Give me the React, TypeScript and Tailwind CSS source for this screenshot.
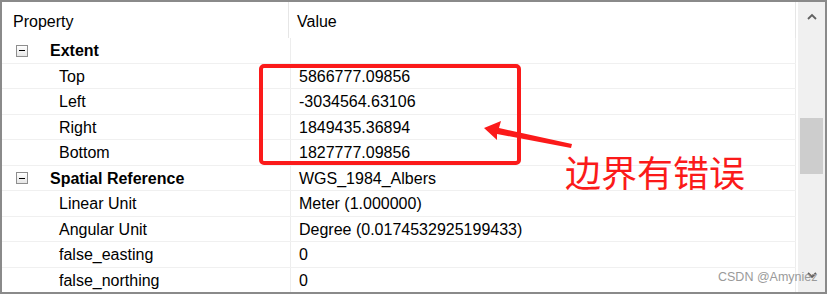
const font = { fontFamily: '"Liberation Sans", Arial, sans-serif' };

type Row = { name: string; value: string; group?: boolean };

const rows: Row[] = [
  { name: "Extent", value: "", group: true },
  { name: "Top", value: "5866777.09856" },
  { name: "Left", value: "-3034564.63106" },
  { name: "Right", value: "1849435.36894" },
  { name: "Bottom", value: "1827777.09856" },
  { name: "Spatial Reference", value: "WGS_1984_Albers", group: true },
  { name: "Linear Unit", value: "Meter (1.000000)" },
  { name: "Angular Unit", value: "Degree (0.0174532925199433)" },
  { name: "false_easting", value: "0" },
  { name: "false_northing", value: "0" },
];

function MinusBox() {
  return (
    <div className="w-[12px] h-[12px] border border-[#8e8e8e] bg-gradient-to-b from-white to-[#e6e6e6] flex items-center justify-center">
      <div className="w-[6px] h-[1px] bg-black" />
    </div>
  );
}

export default function App() {
  return (
    <div
      className="relative w-[827px] h-[294px] overflow-hidden border-2 border-[#8a8a8a] bg-white flex text-[16px] text-black"
      style={font}
    >
      {/* grid */}
      <div className="w-[794px] flex flex-col">
        <div className="h-[36px] flex shrink-0">
          <div className="w-[287px] border-r border-[#e6e6e6] flex items-center pl-[11px] pt-[3px]">Property</div>
          <div className="flex-1 border-r border-[#e6e6e6] flex items-center pl-[8px] pt-[3px]">Value</div>
        </div>
        {rows.map((r) => (
          <div key={r.name} className="h-[25.5px] shrink-0 flex border-b border-[#f0f0f0]">
            <div className="w-[289px] border-r border-[#ededed] flex items-center pt-[2px]">
              {r.group ? (
                <>
                  <div className="ml-[14px] -mt-[1px]">
                    <MinusBox />
                  </div>
                  <span className="ml-[22px] font-bold">{r.name}</span>
                </>
              ) : (
                <span className="ml-[57px]">{r.name}</span>
              )}
            </div>
            <div className="flex-1 border-r border-[#ededed] flex items-center pl-[8px] pt-[2px]">{r.value}</div>
          </div>
        ))}
      </div>

      {/* scrollbar */}
      <div className="flex-1 bg-[#f0f0f0] ml-[2px] flex flex-col items-center">
        <svg width="10" height="7" viewBox="0 0 10 7" className="mt-[11px]">
          <path d="M1 6 L5 2 L9 6" fill="none" stroke="#606060" strokeWidth="1.8" />
        </svg>
        <div className="mt-[98px] w-[23px] h-[56px] bg-[#cdcdcd]" />
        <svg width="10" height="7" viewBox="0 0 10 7" className="mt-[98px]">
          <path d="M1 1 L5 5 L9 1" fill="none" stroke="#606060" strokeWidth="1.8" />
        </svg>
      </div>

      {/* annotation: red box */}
      <div className="absolute left-[257px] top-[62px] w-[262px] h-[101px] border-4 border-[#fb1a1a] rounded-[5px]" />

      {/* annotation: arrow */}
      <svg className="absolute left-[478px] top-[116px]" width="96" height="34" viewBox="478 116 96 34">
        <polygon
          points="482,126 499,119 497,126 570,142 569,146 495,132 495,138"
          fill="#fb1a1a"
        />
      </svg>

      <div
        className="absolute left-[563px] top-[151px] text-[36px] leading-none text-[#fb1a1a]"
        style={{ fontFamily: '"Noto Sans CJK SC", sans-serif' }}
      >
        边界有错误
      </div>

      <div className="absolute left-[716px] top-[269px] text-[12.5px] leading-none text-[#9a9a9a]">
        CSDN @Amyniez
      </div>
    </div>
  );
}
